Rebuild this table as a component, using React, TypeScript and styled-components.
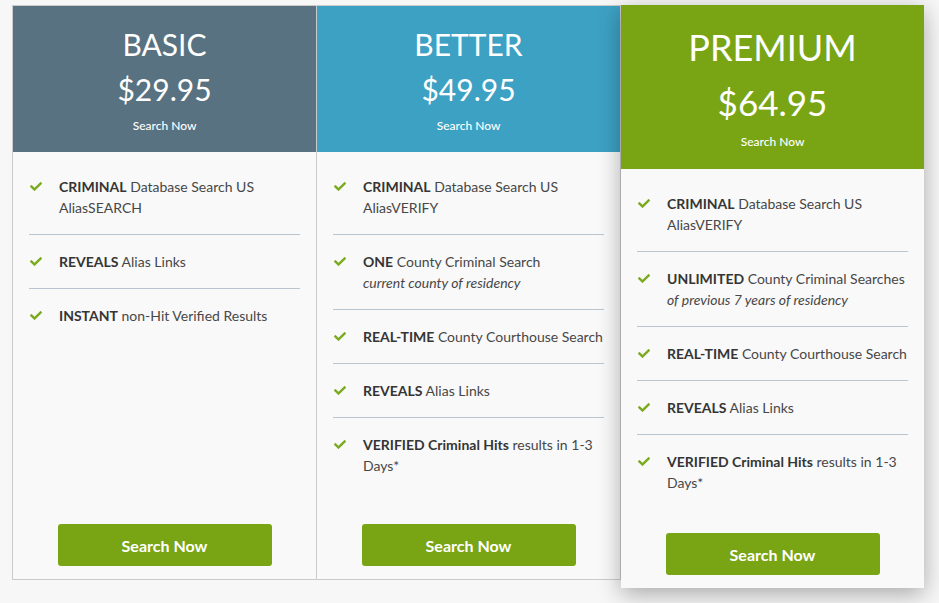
import React from "react";
import styled, { createGlobalStyle } from "styled-components";

const GlobalStyle = createGlobalStyle`
  html, body {
    margin: 0;
    padding: 0;
    background: #f7f7f7;
    font-family: Lato, "Open Sans", "Liberation Sans", sans-serif;
  }
  body { min-height: 603px; }
  * { box-sizing: border-box; }
`;

const Page = styled.div`
  display: flex;
  align-items: flex-start;
  padding: 5px 0 0 12px;
`;

const Card = styled.div<{ $featured?: boolean; $first?: boolean; $w: number }>`
  width: ${(p) => p.$w}px;
  height: ${(p) => (p.$featured ? 583 : 575)}px;
  display: flex;
  flex-direction: column;
  background: #f9f9f9;
  border: ${(p) => (p.$featured ? "none" : "1px solid #cbcbcb")};
  border-left-width: ${(p) => (p.$featured || !p.$first ? 0 : 1)}px;
  box-shadow: ${(p) => (p.$featured ? "0 6px 22px rgba(0,0,0,0.32)" : "none")};
  position: relative;
  z-index: ${(p) => (p.$featured ? 2 : 1)};
`;

const Header = styled.div<{ $bg: string; $featured?: boolean }>`
  background: ${(p) => p.$bg};
  color: #fff;
  text-align: center;
  display: flex;
  flex-direction: column;
  align-items: center;
  padding: ${(p) => (p.$featured ? "20px 0 19px" : "20px 0 18px")};
  height: ${(p) => (p.$featured ? 164 : 146)}px;
`;

const Title = styled.div<{ $featured?: boolean }>`
  font-size: ${(p) => (p.$featured ? 36 : 30)}px;
  line-height: ${(p) => (p.$featured ? 44 : 36)}px;
  font-weight: 400;
`;

const Price = styled.div<{ $featured?: boolean }>`
  font-size: ${(p) => (p.$featured ? 35 : 30)}px;
  line-height: ${(p) => (p.$featured ? 40 : 36)}px;
  margin-top: ${(p) => (p.$featured ? 13 : 9)}px;
  font-weight: 400;
`;

const Sub = styled.div<{ $featured?: boolean }>`
  font-size: 12px;
  line-height: 16px;
  margin-top: ${(p) => (p.$featured ? 12 : 11)}px;
  font-weight: 500;
`;

const FeatureList = styled.ul`
  list-style: none;
  margin: 0;
  padding: 8px 16px 0;
`;

const Feature = styled.li`
  display: flex;
  align-items: flex-start;
  padding: 16px 0;
  border-bottom: 1px solid #b9c6d2;
  font-size: 14px;
  line-height: 21px;
  color: #474747;
  &:last-child {
    border-bottom: none;
  }
`;

const CheckBox = styled.span`
  width: 30px;
  flex: none;
  display: flex;
  align-items: center;
  height: 21px;
  padding-left: 1px;
`;

const FeatureText = styled.div`
  flex: 1;
  b {
    font-weight: 700;
    color: #353535;
  }
  i {
    font-style: italic;
  }
`;

const Cta = styled.button`
  margin: auto auto 13px;
  width: 214px;
  height: 42px;
  border: none;
  border-radius: 3px;
  background: #79a515;
  color: #fff;
  font-family: Lato, "Open Sans", "Liberation Sans", sans-serif;
  font-size: 16px;
  font-weight: 700;
  cursor: pointer;
  padding: 0;
`;

const Check = () => (
  <svg width="12" height="9" viewBox="0 64 512 384" aria-hidden>
    <path
      fill="#7bab1f"
      d="M173.898 439.404l-166.4-166.4c-9.997-9.997-9.997-26.206 0-36.204l36.203-36.204c9.997-9.998 26.207-9.998 36.204 0L192 312.69 432.095 72.596c9.997-9.997 26.207-9.997 36.204 0l36.203 36.204c9.997 9.997 9.997 26.206 0 36.204l-294.4 294.401c-9.998 9.997-26.207 9.997-36.204-.001z"
    />
  </svg>
);

type FeatureItem = { bold: string; rest: string; note?: string };

type Plan = {
  name: string;
  price: string;
  color: string;
  featured?: boolean;
  width: number;
  first?: boolean;
  features: FeatureItem[];
};

const plans: Plan[] = [
  {
    name: "BASIC",
    price: "$29.95",
    color: "#587281",
    width: 305,
    first: true,
    features: [
      { bold: "CRIMINAL", rest: " Database Search US AliasSEARCH" },
      { bold: "REVEALS", rest: " Alias Links" },
      { bold: "INSTANT", rest: " non-Hit Verified Results" },
    ],
  },
  {
    name: "BETTER",
    price: "$49.95",
    color: "#3da1c4",
    width: 304,
    features: [
      { bold: "CRIMINAL", rest: " Database Search US AliasVERIFY" },
      { bold: "ONE", rest: " County Criminal Search", note: "current county of residency" },
      { bold: "REAL-TIME", rest: " County Courthouse Search" },
      { bold: "REVEALS", rest: " Alias Links" },
      { bold: "VERIFIED Criminal Hits", rest: " results in 1-3 Days*" },
    ],
  },
  {
    name: "PREMIUM",
    price: "$64.95",
    color: "#79a515",
    width: 303,
    featured: true,
    features: [
      { bold: "CRIMINAL", rest: " Database Search US AliasVERIFY" },
      { bold: "UNLIMITED", rest: " County Criminal Searches", note: "of previous 7 years of residency" },
      { bold: "REAL-TIME", rest: " County Courthouse Search" },
      { bold: "REVEALS", rest: " Alias Links" },
      { bold: "VERIFIED Criminal Hits", rest: " results in 1-3 Days*" },
    ],
  },
];

export default function App() {
  return (
    <>
      <GlobalStyle />
      <Page>
        {plans.map((plan) => (
          <Card key={plan.name} $featured={plan.featured} $first={plan.first} $w={plan.width}>
            <Header $bg={plan.color} $featured={plan.featured}>
              <Title $featured={plan.featured}>{plan.name}</Title>
              <Price $featured={plan.featured}>{plan.price}</Price>
              <Sub $featured={plan.featured}>Search Now</Sub>
            </Header>
            <FeatureList>
              {plan.features.map((f, i) => (
                <Feature key={i}>
                  <CheckBox>
                    <Check />
                  </CheckBox>
                  <FeatureText>
                    <b>{f.bold}</b>
                    {f.rest}
                    {f.note && (
                      <>
                        <br />
                        <i>{f.note}</i>
                      </>
                    )}
                  </FeatureText>
                </Feature>
              ))}
            </FeatureList>
            <Cta>Search Now</Cta>
          </Card>
        ))}
      </Page>
    </>
  );
}
